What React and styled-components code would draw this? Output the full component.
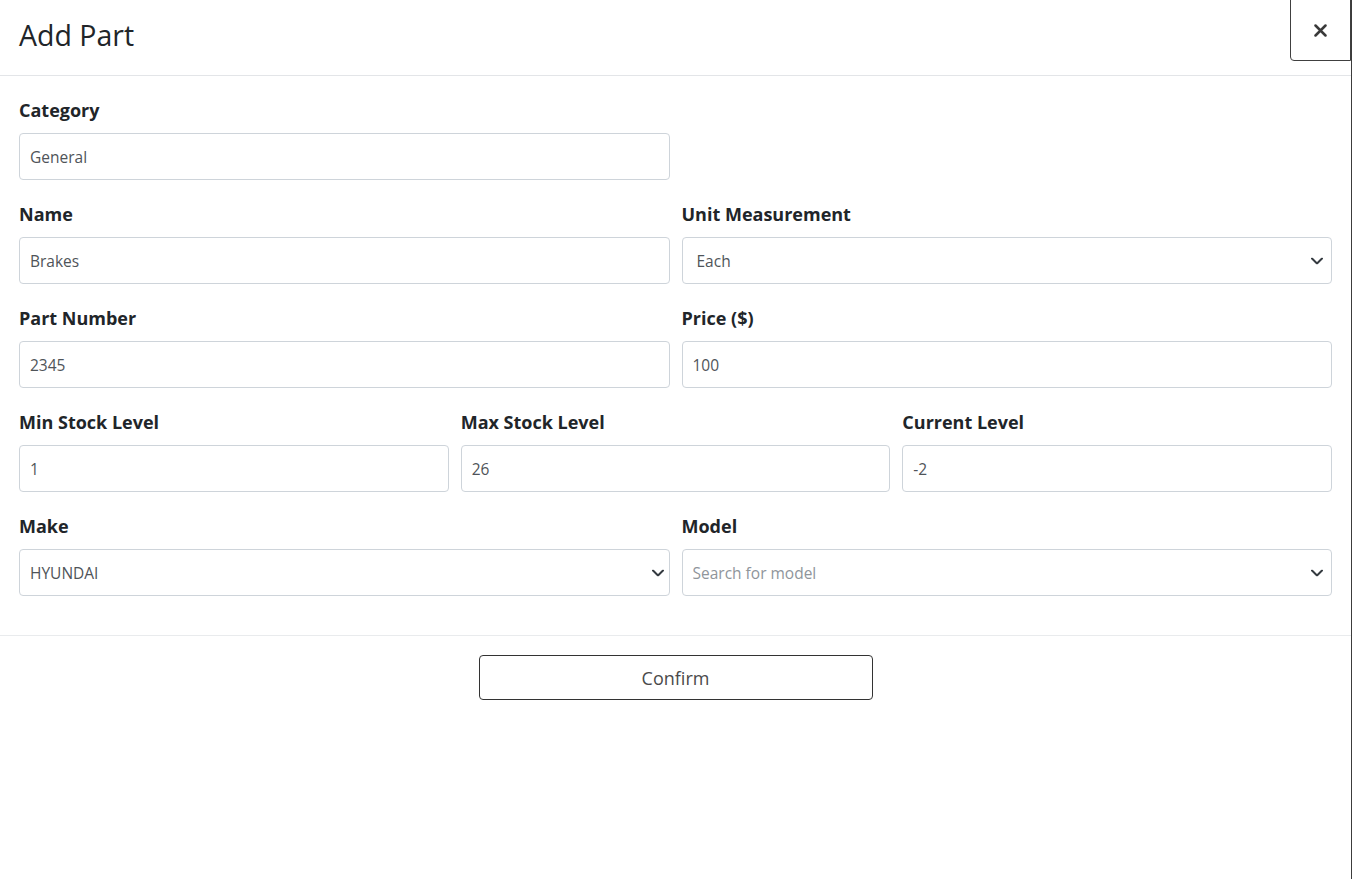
import styled, { createGlobalStyle } from 'styled-components';

const GlobalStyle = createGlobalStyle`
  html, body {
    margin: 0;
    padding: 0;
    background: #fff;
  }
  body {
    font-family: "Open Sans", "Noto Sans", "Liberation Sans", sans-serif;
    color: #212529;
  }
  * {
    box-sizing: border-box;
  }
`;

const Modal = styled.div`
  position: relative;
  width: 100%;
  min-height: 100vh;
  border-right: 1px solid #3c3c3c;
  background: #fff;
`;

const Header = styled.header`
  height: 76px;
  display: flex;
  align-items: center;
  padding: 0 19px;
  border-bottom: 1px solid #e3e5e8;
`;

const Title = styled.h2`
  margin: 0 0 6px;
  font-size: 28.5px;
  font-weight: 400;
  color: #212529;
`;

const CloseButton = styled.button`
  position: absolute;
  top: -1px;
  right: 0;
  width: 61px;
  height: 62px;
  padding: 0;
  display: flex;
  align-items: center;
  justify-content: center;
  background: #fff;
  border: 1px solid #404040;
  border-radius: 0 0 0 4px;
  color: #3a3a3a;
  cursor: pointer;
`;

const Body = styled.div`
  display: flex;
  flex-direction: column;
  gap: 21px;
  padding: 21px 19px 39px;
  border-bottom: 1px solid #e9ebed;
`;

const Row = styled.div`
  display: grid;
  grid-template-columns: repeat(${(p) => p.$cols}, 1fr);
  gap: 12px;
`;

const Field = styled.div`
  display: flex;
  flex-direction: column;
  gap: 9px;
  min-width: 0;
`;

const Label = styled.label`
  font-size: 18px;
  font-weight: 700;
  line-height: 27px;
  color: #212529;
`;

const Input = styled.input`
  width: 100%;
  height: 47px;
  padding: 0 10px;
  border: 1px solid #ced4da;
  border-radius: 4px;
  background: #fff;
  font-family: inherit;
  font-size: 15.5px;
  color: #4f5459;
  outline: none;

  &::placeholder {
    color: #8f959b;
  }
`;

const SelectWrap = styled.div`
  position: relative;
  display: flex;
`;

const Select = styled.select`
  appearance: none;
  width: 100%;
  height: 47px;
  padding: 0 36px 0 ${(p) => p.$pad || 10}px;
  border: 1px solid #ced4da;
  border-radius: 4px;
  background: #fff;
  font-family: inherit;
  font-size: 15.5px;
  color: ${(p) => (p.$placeholder ? '#8f959b' : '#4f5459')};
  outline: none;
`;

const Chevron = styled.svg`
  position: absolute;
  top: 50%;
  right: ${(p) => p.$right || 9}px;
  width: 12px;
  height: 7px;
  transform: translateY(-50%);
  pointer-events: none;
`;

const Footer = styled.div`
  display: flex;
  justify-content: center;
  padding: 19px 0;
`;

const ConfirmButton = styled.button`
  width: 394px;
  height: 45px;
  background: #fff;
  border: 1px solid #333;
  border-radius: 4px;
  font-family: inherit;
  font-size: 18px;
  color: #4a4a4a;
  cursor: pointer;
`;

const ChevronIcon = ({ right }) => (
  <Chevron $right={right} viewBox="0 0 12 7" fill="none" stroke="#343a40" strokeWidth="2" strokeLinecap="round" strokeLinejoin="round">
    <path d="M1 1l5 5 5-5" />
  </Chevron>
);

const SelectField = ({ label, value, options, pad, right, placeholder }) => (
  <Field>
    <Label>{label}</Label>
    <SelectWrap>
      <Select defaultValue={value} $pad={pad} $placeholder={placeholder}>
        {options.map((o) => (
          <option key={o} value={o}>
            {o}
          </option>
        ))}
      </Select>
      <ChevronIcon right={right} />
    </SelectWrap>
  </Field>
);

const TextField = ({ label, value }) => (
  <Field>
    <Label>{label}</Label>
    <Input defaultValue={value} />
  </Field>
);

export default function App() {
  return (
    <>
      <GlobalStyle />
      <Modal>
        <Header>
          <Title>Add Part</Title>
        </Header>
        <CloseButton aria-label="Close">
          <svg width="13" height="13" viewBox="0 0 13 13" stroke="currentColor" strokeWidth="2.5" strokeLinecap="round">
            <path d="M1.5 1.5l10 10M11.5 1.5l-10 10" />
          </svg>
        </CloseButton>
        <Body>
          <Row $cols={2}>
            <TextField label="Category" value="General" />
          </Row>
          <Row $cols={2}>
            <TextField label="Name" value="Brakes" />
            <SelectField label="Unit Measurement" value="Each" options={['Each', 'Box', 'Litre', 'Set']} pad={14} right={9} />
          </Row>
          <Row $cols={2}>
            <TextField label="Part Number" value="2345" />
            <TextField label="Price ($)" value="100" />
          </Row>
          <Row $cols={3}>
            <TextField label="Min Stock Level" value="1" />
            <TextField label="Max Stock Level" value="26" />
            <TextField label="Current Level" value="-2" />
          </Row>
          <Row $cols={2}>
            <SelectField label="Make" value="HYUNDAI" options={['HYUNDAI', 'TOYOTA', 'FORD']} right={6} />
            <SelectField label="Model" value="Search for model" options={['Search for model']} right={9} placeholder />
          </Row>
        </Body>
        <Footer>
          <ConfirmButton>Confirm</ConfirmButton>
        </Footer>
      </Modal>
    </>
  );
}
